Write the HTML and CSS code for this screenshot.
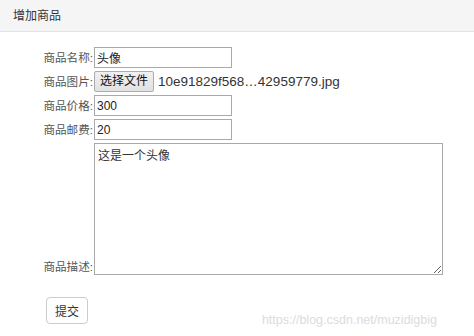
FILE: index.html
```html
<!DOCTYPE html>
<html lang="zh-CN">
<head>
    <meta charset="UTF-8">
    <title>增加商品</title>
    <link rel="stylesheet" href="styles.css">
</head>
<body>
    <div class="panel-heading">增加商品</div>

    <form class="goods-form">
        <div class="row">
            <label>商品名称:</label>
            <input type="text" class="field" value="头像">
        </div>
        <div class="row">
            <label>商品图片:</label>
            <span class="file-btn">选择文件</span>
            <span class="file-name">10e91829f568…42959779.jpg</span>
        </div>
        <div class="row">
            <label>商品价格:</label>
            <input type="text" class="field" value="300">
        </div>
        <div class="row">
            <label>商品邮费:</label>
            <input type="text" class="field" value="20">
        </div>
        <div class="row row-bottom">
            <label>商品描述:</label>
            <textarea class="desc">这是一个头像</textarea>
        </div>
        <button type="button" class="submit-btn">提交</button>
    </form>

    <div class="watermark">https://blog.csdn.net/muzidigbig</div>
</body>
</html>
```

FILE: styles.css
```css
body {
    margin: 0;
    font-family: "Liberation Sans", "Noto Sans CJK SC", Arial, sans-serif;
    font-size: 12px;
    color: #333;
    background: #fff;
    position: relative;
    height: 336px;
    overflow: hidden;
}

.panel-heading {
    height: 31px;
    line-height: 32px;
    padding-left: 13px;
    background: #f5f5f5;
    border-bottom: 1px solid #e3e3e3;
    color: #333;
}

.goods-form {
    padding: 15px 0 0 0;
}

.row {
    display: flex;
    align-items: center;
    margin-bottom: 3px;
}

.row-bottom {
    align-items: flex-end;
}

.row label {
    width: 93px;
    margin-right: 1px;
    flex: none;
    text-align: right;
    color: #555;
    white-space: nowrap;
    line-height: 14px;
    font-size: 11.6px;
}

.row-bottom label {
    margin-bottom: 1px;
}

.field {
    box-sizing: border-box;
    width: 138px;
    height: 21px;
    margin: 0;
    padding: 0 2px;
    border: 1px solid #a9a9a9;
    font-family: "Liberation Sans", "Noto Sans CJK SC", Arial, sans-serif;
    font-size: 12px;
    color: #222;
}

.file-btn {
    box-sizing: border-box;
    height: 21px;
    line-height: 19px;
    padding: 0 5px;
    border: 1px solid #adadad;
    border-radius: 2px;
    background: linear-gradient(#f0f0f0, #e1e1e1);
    color: #111;
}

.file-name {
    margin-left: 4px;
    color: #333;
    font-size: 13.5px;
}

.desc {
    box-sizing: border-box;
    width: 349px;
    height: 132px;
    margin: 0;
    padding: 2px 3px;
    border: 1px solid #a9a9a9;
    font-family: "Liberation Sans", "Noto Sans CJK SC", Arial, sans-serif;
    font-size: 12px;
    color: #333;
}

.submit-btn {
    margin: 19px 0 0 46px;
    width: 42px;
    height: 27px;
    padding: 0;
    background: #fff;
    border: 1px solid #ccc;
    border-radius: 4px;
    font-family: "Liberation Sans", "Noto Sans CJK SC", Arial, sans-serif;
    font-size: 12px;
    color: #333;
}

.watermark {
    position: absolute;
    right: 37px;
    bottom: 9px;
    font-size: 12.5px;
    color: #dcdcdc;
}
```
